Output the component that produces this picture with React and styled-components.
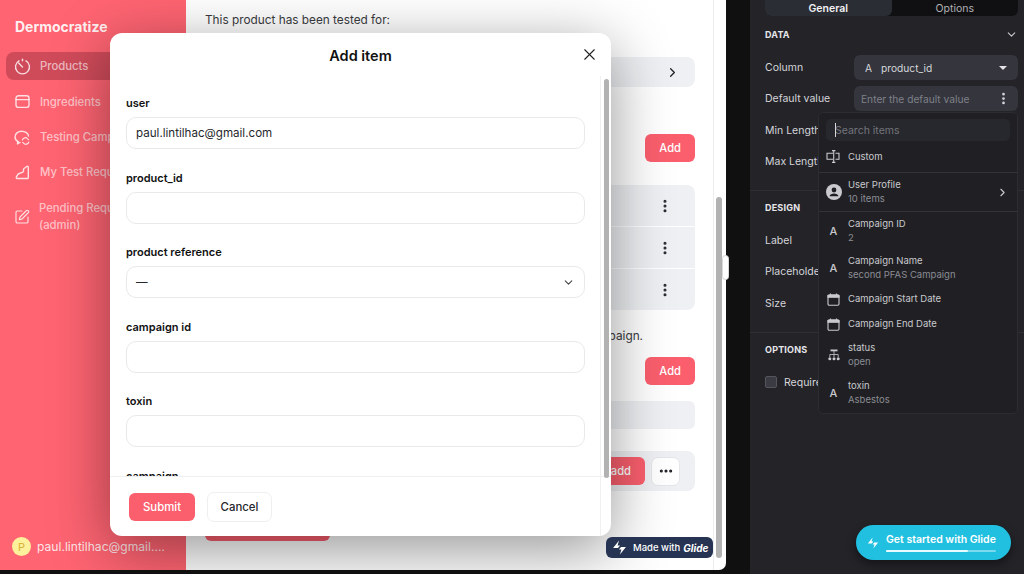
import React from 'react'
import styled, { createGlobalStyle } from 'styled-components'
import { ChevronDown, ChevronRight, MoreVertical, MoreHorizontal, X, SquarePen } from 'lucide-react'

const GlobalStyle = createGlobalStyle`
    html, body { margin: 0; padding: 0; height: 100%; overflow: hidden; }
    body { font-family: Inter, "Liberation Sans", sans-serif; background: #101011; }
    * { box-sizing: border-box; }
`

const navItems = [
    { label: 'Products', icon: 'timer', active: true },
    { label: 'Ingredients', icon: 'calendar' },
    { label: 'Testing Campaigns', icon: 'chat' },
    { label: 'My Test Requests', icon: 'steps' },
    { label: 'Pending Requests (admin)', icon: 'pen', tall: true },
]

const fields = [
    { label: 'user', value: 'paul.lintilhac@gmail.com' },
    { label: 'product_id' },
    { label: 'product reference', value: '—', select: true },
    { label: 'campaign id' },
    { label: 'toxin' },
    { label: 'campaign' },
]

const NavIcon = ({ name }) => {
    if (name === 'pen') return <SquarePen size={16} strokeWidth={1.7} />
    return (
        <svg width="17" height="17" viewBox="0 0 17 17" fill="none" stroke="currentColor" strokeWidth="1.4" strokeLinecap="round" strokeLinejoin="round">
            {name === 'timer' && <>
                <path d="M5 2.8a7 7 0 1 0 7 0" />
                <path d="M8.5 1.2v1.6" />
                <path d="M4.6 5l3.9 4" />
            </>}
            {name === 'calendar' && <>
                <rect x="2" y="2.8" width="13" height="11.6" rx="2.4" />
                <path d="M2 6.6h13" />
            </>}
            {name === 'chat' && <>
                <path d="M4 12.6C1.8 11.4 1 9.8 1 8c0-3.3 3-5.8 6.6-5.8S14.4 4.5 14.5 7" />
                <path d="M4 12.6l-.6 2.4 2.6-1.6" />
                <path d="M8.4 11a3 3 0 0 1 5.2-1.2l.9.9M14.8 13a3 3 0 0 1-5.2 1.2l-.9-.9" strokeWidth="1.2" />
            </>}
            {name === 'steps' && (
                <path d="M3 14.5h10.5a.8.8 0 0 0 .8-.8V3.3c0-.9-.9-1.3-1.6-.8L9.5 5v2.2c0 .5-.3.8-.8 1L4.2 10l-1.8 2.8c-.5.9 0 1.7.6 1.7z" />
            )}
        </svg>
    )
}

const GlideMark = ({ size = 14 }) => (
    <svg width={size} height={size} viewBox="0 0 14 14" fill="currentColor">
        <path d="M6.6.5L1 7.5h4.6l1.9-2.3H5.2L6.6.5z" />
        <path d="M7.4 13.5L13 6.5H8.4L6.500 8.800h2.300l-1.400 4.700z" />
    </svg>
)

const LetterIcon = () => <LetterA>A</LetterA>

const DateIcon = () => (
    <svg width="13" height="13" viewBox="0 0 13 13" fill="none" stroke="#c9c9ce" strokeWidth="1.1">
        <rect x="1" y="1.8" width="11" height="10.4" rx="1.2" />
        <path d="M1 2.5h11v1.8H1z" fill="#c9c9ce" />
        <path d="M3.5.5V2M9.5.5V2" />
    </svg>
)

const CustomIcon = () => (
    <svg width="15" height="13" viewBox="0 0 15 13" fill="none" stroke="#c9c9ce" strokeWidth="1.1">
        <path d="M7 3.2H1v6h6M9.5 3.2H13v6H9.5" />
        <path d="M6 .6h3.4M7.7.6v11.8M6 12.4h3.4" />
    </svg>
)

const ProfileIcon = () => (
    <svg width="16" height="16" viewBox="0 0 16 16">
        <circle cx="8" cy="8" r="8" fill="#c9c9ce" />
        <circle cx="8" cy="6" r="2.4" fill="#202024" />
        <path d="M3.6 12.2c0-1.900 2.600-2.800 4.400-2.800s4.400.9 4.400 2.800z" fill="#202024" />
    </svg>
)

const TreeIcon = () => (
    <svg width="12" height="12" viewBox="0 0 12 12" fill="#c9c9ce" stroke="#c9c9ce" strokeWidth=".8">
        <rect x="2.5" y=".5" width="7" height="1.8" stroke="none" />
        <path d="M6 2v6M1.8 8V5.5h8.400V8" fill="none" />
        <circle cx="1.8" cy="9.8" r="1.5" stroke="none" />
        <circle cx="6" cy="9.8" r="1.5" stroke="none" />
        <circle cx="10.2" cy="9.8" r="1.5" stroke="none" />
    </svg>
)

const pickerItems = [
    { title: 'Campaign ID', sub: '2', icon: <LetterIcon /> },
    { title: 'Campaign Name', sub: 'second PFAS Campaign', icon: <LetterIcon /> },
    { title: 'Campaign Start Date', icon: <DateIcon /> },
    { title: 'Campaign End Date', icon: <DateIcon /> },
    { title: 'status', sub: 'open', icon: <TreeIcon /> },
    { title: 'toxin', sub: 'Asbestos', icon: <LetterIcon /> },
]

const App = () => {
    return (
        <Page>
            <GlobalStyle />
            <Frame>
                <Sidebar>
                    <Logo>Dermocratize</Logo>
                    <Nav>
                        {navItems.map((item) => (
                            <NavItem key={item.label} $active={item.active} $tall={item.tall}>
                                <NavIcon name={item.icon} />
                                <NavLabel>{item.label}</NavLabel>
                            </NavItem>
                        ))}
                    </Nav>
                    <UserRow>
                        <Avatar>P</Avatar>
                        <UserEmail>paul.lintilhac@gmail.com</UserEmail>
                    </UserRow>
                </Sidebar>

                <Main>
                    <BodyText>This product has been tested for:</BodyText>
                    <ListRow $mt={28}><ChevronRight size={15} /></ListRow>
                    <ActionRow $mt={47}><RedButton>Add</RedButton></ActionRow>
                    <Group>
                        <GroupRow><MoreVertical size={16} strokeWidth={2.6} /></GroupRow>
                        <GroupRow><MoreVertical size={16} strokeWidth={2.6} /></GroupRow>
                        <GroupRow><MoreVertical size={16} strokeWidth={2.6} /></GroupRow>
                    </Group>
                    <BodyText $mt={18} $right>Request testing for this product in a campaign.</BodyText>
                    <ActionRow $mt={12}><RedButton>Add</RedButton></ActionRow>
                    <EmptyBar />
                    <ActionCard>
                        <RedButton>Request add</RedButton>
                        <MoreButton><MoreHorizontal size={16} strokeWidth={2.6} /></MoreButton>
                    </ActionCard>
                    <WideButton />
                </Main>

                <ScrollTrack>
                    <ScrollThumb />
                </ScrollTrack>

                <Modal>
                    <ModalHeader>
                        <ModalTitle>Add item</ModalTitle>
                        <CloseButton><X size={19} strokeWidth={1.4} /></CloseButton>
                    </ModalHeader>
                    <ModalBody>
                        {fields.map((field) => (
                            <Field key={field.label}>
                                <FieldLabel>{field.label}</FieldLabel>
                                <FieldBox>
                                    {field.value}
                                    {field.select && <ChevronDown size={13} color="#444" />}
                                </FieldBox>
                            </Field>
                        ))}
                    </ModalBody>
                    <ModalFooter>
                        <SubmitButton>Submit</SubmitButton>
                        <CancelButton>Cancel</CancelButton>
                    </ModalFooter>
                    <ModalScroll>
                        <ModalThumb />
                    </ModalScroll>
                </Modal>

                <GlideBadge>
                    <GlideMark size={15} />
                    <span>Made with</span>
                    <GlideWord>Glide</GlideWord>
                </GlideBadge>
            </Frame>
            <ResizeHandle />

            <Panel>
                <Tabs>
                    <Tab $active>General</Tab>
                    <Tab>Options</Tab>
                </Tabs>
                <Section>
                    <SectionHead>DATA<ChevronDown size={13} color="#c9c9ce" /></SectionHead>
                    <PanelRow>
                        <PanelLabel>Column</PanelLabel>
                        <Control>
                            <ControlLetter>A</ControlLetter>
                            <ControlText>product_id</ControlText>
                            <Caret />
                        </Control>
                    </PanelRow>
                    <PanelRow>
                        <PanelLabel>Default value</PanelLabel>
                        <Control>
                            <ControlHint>Enter the default value</ControlHint>
                            <MoreVertical size={15} color="#d5d5da" strokeWidth={2.4} />
                        </Control>
                    </PanelRow>
                    <PanelRow><PanelLabel>Min Length</PanelLabel></PanelRow>
                    <PanelRow><PanelLabel>Max Length</PanelLabel></PanelRow>
                </Section>
                <Section>
                    <SectionHead>DESIGN</SectionHead>
                    <PanelRow><PanelLabel>Label</PanelLabel></PanelRow>
                    <PanelRow><PanelLabel>Placeholder</PanelLabel></PanelRow>
                    <PanelRow><PanelLabel>Size</PanelLabel></PanelRow>
                </Section>
                <Section $last>
                    <SectionHead>OPTIONS</SectionHead>
                    <CheckRow><CheckBox /><PanelLabel>Required</PanelLabel></CheckRow>
                </Section>

                <Picker>
                    <SearchBox><Cursor />Search items</SearchBox>
                    <PickerRow $h={31}>
                        <PickerIcon><CustomIcon /></PickerIcon>
                        <PickerTitle>Custom</PickerTitle>
                    </PickerRow>
                    <PickerRow $border $h={38}>
                        <PickerIcon><ProfileIcon /></PickerIcon>
                        <PickerText>
                            <PickerTitle>User Profile</PickerTitle>
                            <PickerSub>10 items</PickerSub>
                        </PickerText>
                        <ChevronRight size={13} color="#c9c9ce" />
                    </PickerRow>
                    <PickerList>
                        {pickerItems.map((item) => (
                            <PickerRow key={item.title} $h={item.sub ? 37.4 : 25}>
                                <PickerIcon>{item.icon}</PickerIcon>
                                <PickerText>
                                    <PickerTitle>{item.title}</PickerTitle>
                                    {item.sub && <PickerSub>{item.sub}</PickerSub>}
                                </PickerText>
                            </PickerRow>
                        ))}
                    </PickerList>
                </Picker>

                <StartButton>
                    <GlideMark size={12} />
                    <StartText>
                        Get started with Glide
                        <Progress><ProgressFill /></Progress>
                    </StartText>
                </StartButton>
            </Panel>
        </Page>
    )
}

export default App

const Page = styled.div`
    position: relative;
    display: flex;
    width: 1024px;
    height: 574px;
    overflow: hidden;
    background: #101011;
`

const Frame = styled.div`
    position: relative;
    display: flex;
    flex: 0 0 726px;
    height: 570px;
    background: #fff;
    border-bottom-right-radius: 7px;
    overflow: hidden;
`

const Sidebar = styled.aside`
    display: flex;
    flex-direction: column;
    flex: 0 0 186px;
    min-width: 0;
    background: #ff6472;
    color: #fff;
`

const Logo = styled.div`
    padding: 18px 0 0 15px;
    height: 52px;
    font-size: 14px;
    font-weight: 700;
    line-height: 18px;
    color: rgba(255, 255, 255, 0.92);
`

const Nav = styled.nav`
    display: flex;
    flex-direction: column;
    gap: 7.3px;
    flex: 1;
    padding: 0 6px;
`

const NavItem = styled.div`
    display: flex;
    align-items: center;
    gap: 9px;
    height: ${(p) => (p.$tall ? '38px' : '28px')};
    margin-top: ${(p) => (p.$tall ? '4px' : '0')};
    padding: 1px 0 0 8px;
    border-radius: 8px;
    font-size: 11.3px;
    line-height: 16.5px;
    font-weight: 500;
    color: rgba(255, 255, 255, 0.62);
    background: ${(p) => (p.$active ? 'rgba(120, 30, 45, 0.35)' : 'transparent')};
    svg { flex: none; color: rgba(255, 255, 255, 0.8); }
`

const NavLabel = styled.span`
    white-space: normal;
`

const UserRow = styled.div`
    display: flex;
    align-items: center;
    gap: 6px;
    min-width: 0;
    padding: 0 19px 14px 12px;
`

const Avatar = styled.div`
    display: flex;
    flex: none;
    align-items: center;
    justify-content: center;
    width: 19px;
    height: 19px;
    border-radius: 50%;
    background: #fdf29b;
    color: #d9b23a;
    font-size: 11px;
`

const UserEmail = styled.span`
    min-width: 0;
    overflow: hidden;
    white-space: nowrap;
    text-overflow: ellipsis;
    font-size: 12.1px;
    color: rgba(255, 255, 255, 0.85);
`

const Main = styled.main`
    display: flex;
    flex-direction: column;
    flex: 1;
    min-width: 0;
    padding: 12px 18px 0 19px;
    border-right: 1px solid #eceded;
    color: #3a3b40;
`

const BodyText = styled.div`
    margin-top: ${(p) => p.$mt || 0}px;
    line-height: 17px;
    font-size: 11.8px;
    white-space: nowrap;
    text-align: ${(p) => (p.$right ? 'right' : 'left')};
    padding-right: ${(p) => (p.$right ? '52px' : '0')};
`

const ListRow = styled.div`
    display: flex;
    flex: none;
    align-items: center;
    justify-content: flex-end;
    height: 30px;
    margin-top: ${(p) => p.$mt}px;
    padding-right: 15px;
    background: #eef0f3;
    border-radius: 8px;
    color: #222;
`

const ActionRow = styled.div`
    display: flex;
    flex: none;
    justify-content: flex-end;
    margin-top: ${(p) => p.$mt}px;
`

const RedButton = styled.div`
    display: flex;
    align-items: center;
    justify-content: center;
    min-width: 49px;
    height: 28px;
    padding: 0 14px;
    background: #fb5f6e;
    border-radius: 6px;
    color: #fff;
    font-size: 11.2px;
    font-weight: 500;
    white-space: nowrap;
`

const Group = styled.div`
    display: flex;
    flex-direction: column;
    gap: 1px;
    flex: none;
    margin-top: 23px;
    border-radius: 8px;
    overflow: hidden;
`

const GroupRow = styled.div`
    display: flex;
    align-items: center;
    justify-content: flex-end;
    height: 41px;
    padding-right: 22px;
    background: #eef0f3;
    color: #2a2b33;
`

const EmptyBar = styled.div`
    flex: none;
    height: 28px;
    margin-top: 16px;
    background: #eef0f3;
    border-radius: 6px;
`

const ActionCard = styled.div`
    display: flex;
    flex: none;
    align-items: center;
    justify-content: flex-end;
    gap: 6px;
    height: 40px;
    margin-top: 22px;
    padding-right: 15px;
    background: #eef0f3;
    border-radius: 8px;
`

const MoreButton = styled.div`
    display: flex;
    align-items: center;
    justify-content: center;
    width: 29px;
    height: 29px;
    background: #fff;
    border: 1px solid #e5e6e9;
    border-radius: 7px;
    color: #1c1c22;
`

const WideButton = styled.div`
    flex: none;
    width: 125px;
    height: 30px;
    margin-top: 20px;
    background: #fb5f6e;
    border-radius: 6px;
`

const ScrollTrack = styled.div`
    flex: 0 0 12px;
    padding: 197px 4px 12px 2px;
`

const ScrollThumb = styled.div`
    height: 100%;
    background: #b2b2b2;
    border-radius: 3px;
`

const ResizeHandle = styled.div`
    position: absolute;
    top: 255px;
    left: 722px;
    width: 7px;
    height: 25px;
    background: #fff;
    border: 1px solid #d8d8da;
    border-radius: 4px;
`

const Modal = styled.div`
    position: absolute;
    top: 33px;
    left: 110px;
    display: flex;
    flex-direction: column;
    width: 501px;
    height: 503px;
    background: #fff;
    border-radius: 12px;
    box-shadow: 0 14px 60px rgba(0, 0, 0, 0.42);
    overflow: hidden;
`

const ModalHeader = styled.div`
    display: flex;
    flex: none;
    align-items: center;
    justify-content: center;
    height: 44px;
    position: relative;
`

const ModalTitle = styled.div`
    font-size: 14.5px;
    font-weight: 600;
    color: #111;
`

const CloseButton = styled.div`
    position: absolute;
    top: 12px;
    right: 12px;
    display: flex;
    color: #222;
`

const ModalBody = styled.div`
    flex: 1;
    display: flex;
    flex-direction: column;
    gap: 21.5px;
    padding: 19px 26px 0 16px;
    overflow: hidden;
`

const Field = styled.div`
    display: flex;
    flex: none;
    flex-direction: column;
    gap: 6px;
`

const FieldLabel = styled.div`
    font-size: 11px;
    line-height: 15px;
    font-weight: 600;
    color: #111;
`

const FieldBox = styled.div`
    display: flex;
    align-items: center;
    justify-content: space-between;
    height: 32px;
    padding: 0 9px;
    background: #fff;
    border: 1px solid #e8e9eb;
    border-radius: 10px;
    font-size: 11.6px;
    color: #26272d;
`

const ModalFooter = styled.div`
    display: flex;
    flex: none;
    align-items: center;
    gap: 12px;
    height: 60px;
    padding: 0 0 0 19px;
    border-top: 1px solid #eeeff0;
`

const SubmitButton = styled.div`
    display: flex;
    align-items: center;
    justify-content: center;
    width: 66px;
    height: 28px;
    background: #fb5f6e;
    border-radius: 6px;
    color: #fff;
    font-size: 11.4px;
    font-weight: 500;
`

const CancelButton = styled.div`
    display: flex;
    align-items: center;
    justify-content: center;
    width: 65px;
    height: 30px;
    border: 1px solid #eeeff1;
    border-radius: 7px;
    color: #26272d;
    font-size: 11.4px;
    font-weight: 500;
`

const ModalScroll = styled.div`
    position: absolute;
    top: 43px;
    right: 0;
    bottom: 0;
    width: 11px;
    padding: 3px 2px 58px 3px;
    border-left: 1px solid #f0f0f1;
`

const ModalThumb = styled.div`
    height: 100%;
    background: #b2b2b2;
    border-radius: 3px;
`

const GlideBadge = styled.div`
    position: absolute;
    left: 606px;
    top: 537px;
    display: flex;
    align-items: center;
    gap: 3px;
    width: 107px;
    height: 21px;
    padding-left: 6px;
    background: #263353;
    border-radius: 6px;
    color: #fff;
    font-size: 9.5px;
    font-weight: 500;
    white-space: nowrap;
    span:first-of-type { margin-left: 3px; }
`

const GlideWord = styled.span`
    font-weight: 700;
    font-style: italic;
    font-size: 10px;
`

const Panel = styled.section`
    position: relative;
    flex: 1;
    height: 574px;
    margin-left: 24px;
    padding: 0 6px 0 15px;
    background: #232328;
    color: #d5d5da;
`

const Tabs = styled.div`
    display: flex;
    height: 16px;
    background: #101012;
    border-radius: 0 0 6px 6px;
`

const Tab = styled.div`
    display: flex;
    flex: 1;
    align-items: flex-end;
    justify-content: center;
    font-size: 10.5px;
    line-height: 14px;
    font-weight: ${(p) => (p.$active ? 600 : 400)};
    color: ${(p) => (p.$active ? '#f1f1f3' : '#b0b0b6')};
    background: ${(p) => (p.$active ? '#2b2d34' : 'transparent')};
    border-radius: 0 0 6px 6px;
`

const Section = styled.div`
    margin: 0 -6px 0 -15px;
    padding: 12px 6px 10px 15px;
    border-bottom: ${(p) => (p.$last ? 'none' : '1px solid #2e2e34')};
    & + & { padding-top: 10px; }
`

const SectionHead = styled.div`
    display: flex;
    align-items: center;
    justify-content: space-between;
    height: 13px;
    margin-bottom: 14px;
    font-size: 9px;
    font-weight: 700;
    letter-spacing: 0.2px;
    color: #e6e6ea;
`

const PanelRow = styled.div`
    display: flex;
    align-items: center;
    height: 25px;
    margin-bottom: 6.3px;
`

const PanelLabel = styled.div`
    flex: 0 0 89px;
    font-size: 10.5px;
    color: #d5d5da;
    white-space: nowrap;
`

const Control = styled.div`
    display: flex;
    flex: 1;
    align-items: center;
    height: 25px;
    padding: 0 7px;
    background: #34353d;
    border-radius: 6px;
    font-size: 10.2px;
`

const ControlLetter = styled.span`
    margin: 0 9px 0 4px;
    color: #d5d5da;
`

const ControlText = styled.span`
    flex: 1;
    color: #d5d5da;
`

const ControlHint = styled.span`
    flex: 1;
    color: #7f8088;
`

const Caret = styled.span`
    margin-right: 4px;
    border-left: 4px solid transparent;
    border-right: 4px solid transparent;
    border-top: 4px solid #e4e4e8;
`

const CheckRow = styled.div`
    display: flex;
    align-items: center;
    gap: 7px;
    height: 14px;
    margin-top: 19px;
`

const CheckBox = styled.div`
    width: 12px;
    height: 12px;
    background: #3a3b43;
    border: 1px solid #54555d;
    border-radius: 2px;
`

const Picker = styled.div`
    position: absolute;
    top: 112px;
    left: 68px;
    width: 200px;
    height: 302px;
    padding: 6px 0 0;
    background: #202024;
    border: 1px solid #2c2c31;
    border-radius: 5px;
`

const SearchBox = styled.div`
    position: relative;
    display: flex;
    align-items: center;
    height: 22px;
    margin: 0 7px;
    padding-left: 9px;
    background: #27282d;
    border-radius: 5px;
    font-size: 10.5px;
    color: #74757c;
`

const Cursor = styled.span`
    position: absolute;
    left: 9px;
    top: 4px;
    width: 1px;
    height: 14px;
    background: #d5d5da;
`

const PickerRow = styled.div`
    display: flex;
    align-items: center;
    height: ${(p) => p.$h}px;
    padding-right: 8px;
    border-top: ${(p) => (p.$border ? '1px solid #33333a' : 'none')};
    border-bottom: ${(p) => (p.$border ? '1px solid #33333a' : 'none')};
    box-sizing: content-box;
`

const PickerIcon = styled.div`
    display: flex;
    flex: 0 0 29px;
    align-items: center;
    justify-content: center;
`

const PickerText = styled.div`
    display: flex;
    flex: 1;
    flex-direction: column;
`

const PickerTitle = styled.div`
    font-size: 9.5px;
    line-height: 14px;
    color: #c9c9ce;
    white-space: nowrap;
`

const PickerSub = styled.div`
    font-size: 9.5px;
    line-height: 14px;
    color: #8b8c93;
    white-space: nowrap;
`

const PickerList = styled.div`
    display: flex;
    flex-direction: column;
`

const LetterA = styled.span`
    font-size: 11px;
    font-weight: 500;
    color: #c9c9ce;
`

const StartButton = styled.div`
    position: absolute;
    top: 525px;
    left: 106px;
    display: flex;
    align-items: center;
    gap: 7px;
    width: 155px;
    height: 35px;
    padding-left: 11px;
    background: #22c0e0;
    border-radius: 18px;
    box-shadow: 0 4px 10px rgba(0, 0, 0, 0.4);
    color: #fff;
`

const StartText = styled.div`
    display: flex;
    flex-direction: column;
    gap: 4px;
    font-size: 10.5px;
    font-weight: 600;
    line-height: 13px;
    white-space: nowrap;
`

const Progress = styled.div`
    height: 2px;
    background: rgba(255, 255, 255, 0.4);
    border-radius: 1px;
`

const ProgressFill = styled.div`
    width: 75%;
    height: 100%;
    background: #e8fbff;
    border-radius: 1px;
`
